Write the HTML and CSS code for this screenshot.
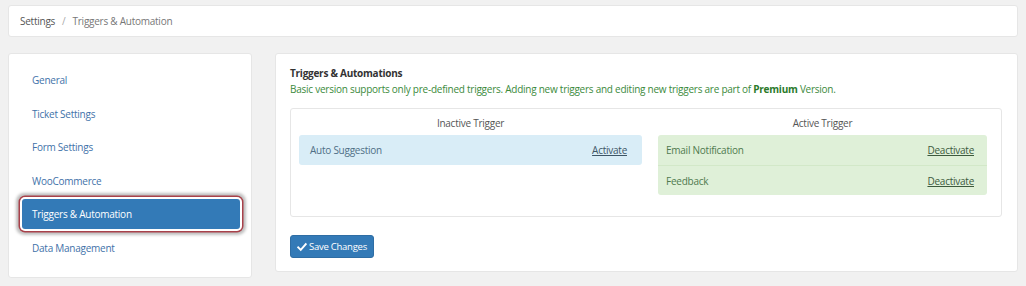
FILE: index.html
```html
<!DOCTYPE html>
<html>
<head>
<meta charset="utf-8">
<link rel="stylesheet" href="styles.css">
</head>
<body>
<div class="breadcrumb"><span class="crumb">Settings</span><span class="sep">/</span><span class="crumb current">Triggers &amp; Automation</span></div>
<div class="layout">
  <nav class="sidebar">
    <a class="nav-item">General</a>
    <a class="nav-item">Ticket Settings</a>
    <a class="nav-item">Form Settings</a>
    <a class="nav-item">WooCommerce</a>
    <a class="nav-item active">Triggers &amp; Automation</a>
    <a class="nav-item">Data Management</a>
  </nav>
  <main class="main">
    <h3 class="title">Triggers &amp; Automations</h3>
    <p class="note">Basic version supports only pre-defined triggers. Adding new triggers and editing new triggers are part of <b>Premium</b> Version.</p>
    <div class="triggers">
      <div class="col">
        <div class="col-head">Inactive Trigger</div>
        <div class="list info">
          <div class="row"><span>Auto Suggestion</span><a class="link">Activate</a></div>
        </div>
      </div>
      <div class="col">
        <div class="col-head">Active Trigger</div>
        <div class="list success">
          <div class="row"><span>Email Notification</span><a class="link">Deactivate</a></div>
          <div class="row"><span>Feedback</span><a class="link">Deactivate</a></div>
        </div>
      </div>
    </div>
    <button class="save"><svg class="check" viewBox="0 0 16 16" width="10" height="10"><path d="M2 8.5 L6 12.5 L14 3.5" fill="none" stroke="#fff" stroke-width="3" stroke-linecap="square"/></svg>Save Changes</button>
  </main>
</div>
</body>
</html>
```
FILE: styles.css
```css
html, body { margin: 0; padding: 0; }
body {
  background: #f1f1f1;
  font-family: "Open Sans", "Noto Sans", sans-serif;
  font-size: 10px;
  letter-spacing: -0.25px;
  color: #555;
  padding: 5px 8px 0 8px;
  width: 1010px;
}
.breadcrumb {
  background: #fff;
  border: 1px solid #e6e6e6;
  border-radius: 3px;
  height: 30px;
  display: flex;
  align-items: center;
  padding-left: 11px;
  color: #555;
}
.sep { color: #aaa; margin: 0 7px; }
.crumb.current { color: #777; }
.layout {
  display: flex;
  gap: 23px;
  margin-top: 16px;
  align-items: flex-start;
}
.sidebar {
  width: 245px;
  box-sizing: border-box;
  background: #fff;
  border: 1px solid #e6e6e6;
  border-radius: 3px;
  padding: 11px 11px 14px 13px;
  display: flex;
  flex-direction: column;
  gap: 3.6px;
  height: 225px;
}
.nav-item {
  height: 30px;
  display: flex;
  align-items: center;
  padding-left: 10px;
  color: #3f72a9;
  border-radius: 3px;
}
.nav-item.active {
  background: #337ab7;
  color: #fff;
  box-shadow: 0 0 0 2px #fff, 0 0 0 3.5px #a8414a, 0 0 3px 6px rgba(0,0,0,0.25);
}
.main {
  flex: 1;
  box-sizing: border-box;
  background: #fff;
  border: 1px solid #e6e6e6;
  border-radius: 3px;
  padding: 12px 15px 13px 14px;
  height: 219px;
}
.title {
  margin: 0;
  font-size: 10px;
  font-weight: 700;
  color: #333;
  line-height: 14px;
}
.note {
  margin: 2px 0 0 0;
  color: #3b8a3b;
  line-height: 14px;
}
.note b { color: #2a7a2a; }
.triggers {
  margin-top: 12px;
  border: 1px solid #e6e6e6;
  border-radius: 3px;
  display: grid;
  grid-template-columns: 343px 329px;
  column-gap: 16px;
  padding: 0 14px 19px 8px;
  height: 88px;
}
.col-head {
  text-align: center;
  color: #555;
  height: 26px;
  line-height: 29px;
}
.list {
  border-radius: 3px;
}
.list.info { background: #d9edf7; color: #4f6f86; }
.list.success { background: #dff0d8; color: #4f7a4f; }
.row {
  height: 30px;
  display: flex;
  align-items: center;
  justify-content: space-between;
  padding: 0 15px 0 11px;
}
.list.success .row { padding: 0 13px 0 8px; }
.list.success .row + .row { border-top: 1px solid #d2e8c8; height: 29px; }
.link { text-decoration: underline; color: #3d5566; }
.list.success .link { color: #3d5a3d; }
.save {
  margin-top: 18px;
  background: #337ab7;
  color: #fff;
  border: 1px solid #2e6da4;
  border-radius: 3px;
  height: 23px;
  width: 84px;
  padding: 0;
  font-family: inherit;
  font-size: 9.5px;
  letter-spacing: -0.25px;
  display: flex;
  align-items: center;
  justify-content: center;
  gap: 2px;
}
.check { display: block; }
```
